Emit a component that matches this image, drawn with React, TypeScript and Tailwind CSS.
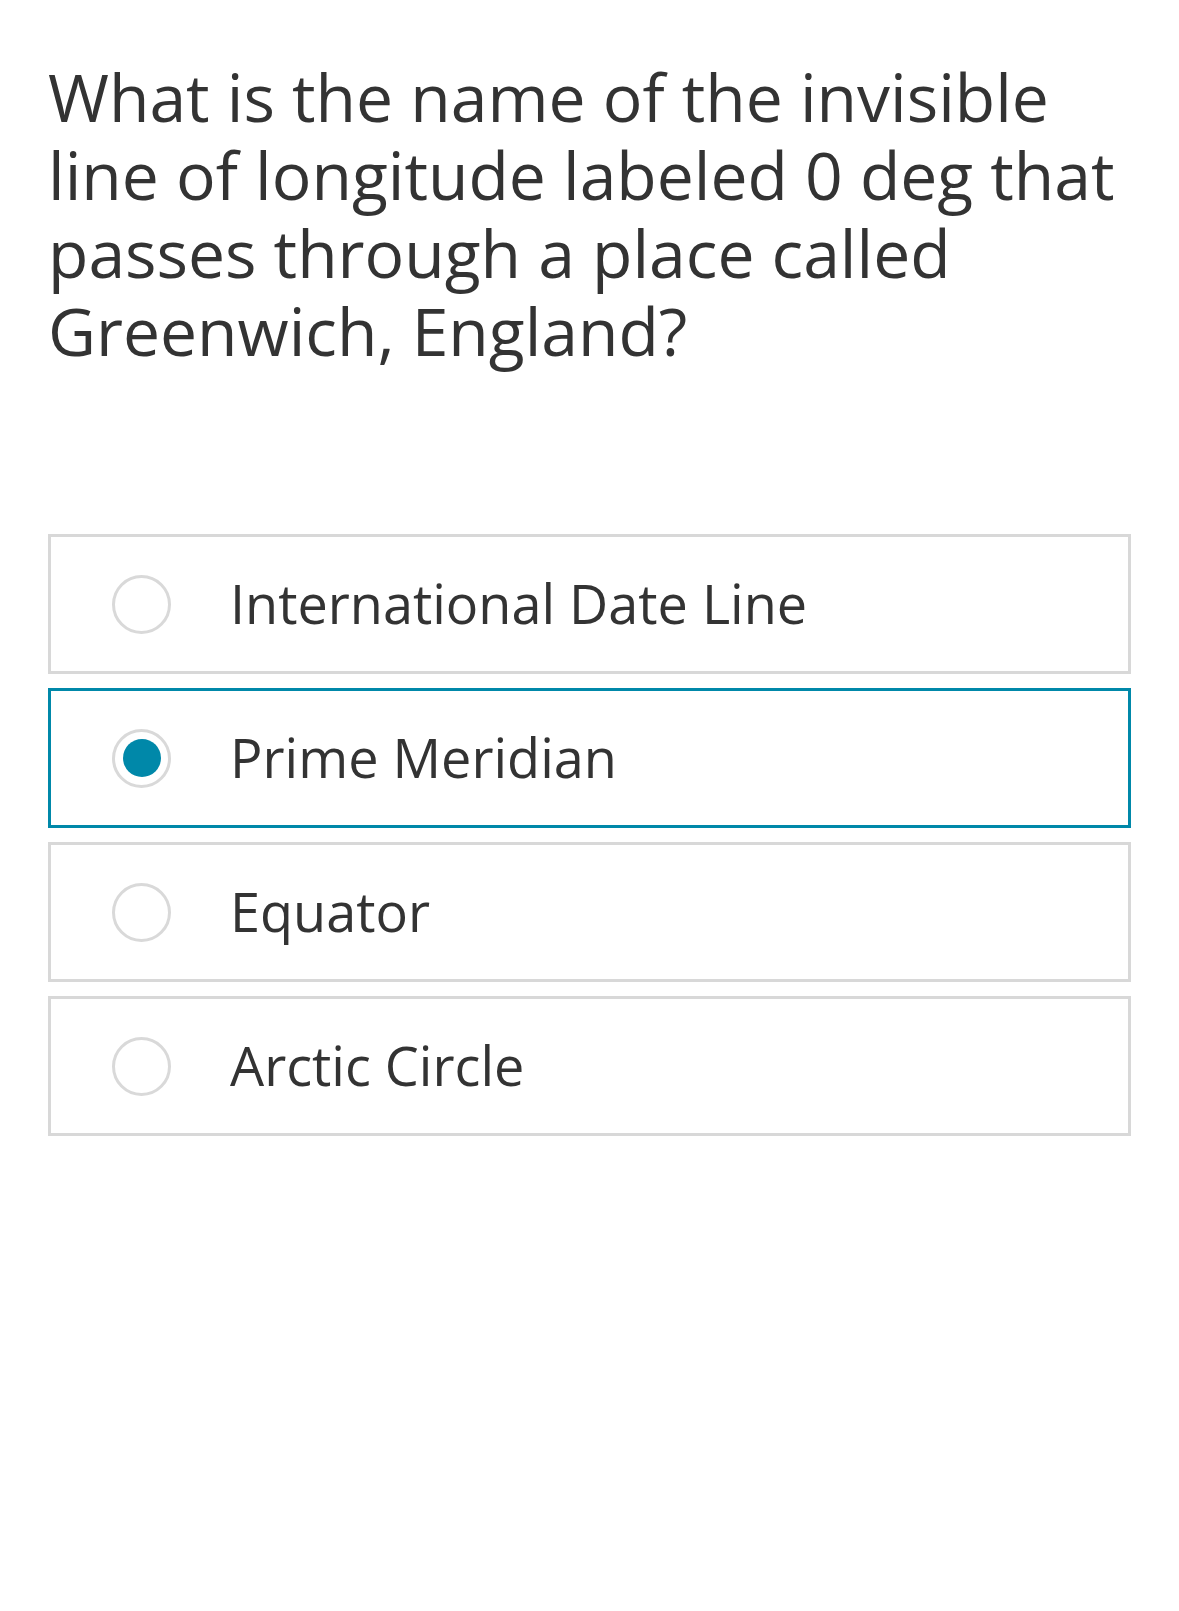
import React from "react";

const options = [
  { label: "International Date Line", selected: false },
  { label: "Prime Meridian", selected: true },
  { label: "Equator", selected: false },
  { label: "Arctic Circle", selected: false },
];

export default function App() {
  return (
    <div
      className="min-h-[1611px] w-full bg-white px-[48px] pt-[57px] text-[#333333]"
      style={{ fontFamily: '"Open Sans", "Noto Sans", sans-serif' }}
    >
      <h1 className="text-[66px] font-normal leading-[78px] tracking-[0px]">
        What is the name of the invisible line of longitude labeled 0 deg that passes through a place called Greenwich, England?
      </h1>
      <div className="mt-[165px] flex flex-col gap-[14px]">
        {options.map((o) => (
          <div
            key={o.label}
            className={
              "flex h-[140px] items-center border-[3px] bg-white pl-[61px] " +
              (o.selected ? "border-[#0088a9]" : "border-[#d8d8d8]")
            }
          >
            <div className="flex h-[59px] w-[59px] shrink-0 items-center justify-center rounded-full border-[3px] border-[#d9d9d9] bg-white">
              {o.selected && <div className="h-[38px] w-[38px] rounded-full bg-[#0088a9]" />}
            </div>
            <span className="ml-[59px] pb-[2px] text-[54px] leading-none">{o.label}</span>
          </div>
        ))}
      </div>
    </div>
  );
}
